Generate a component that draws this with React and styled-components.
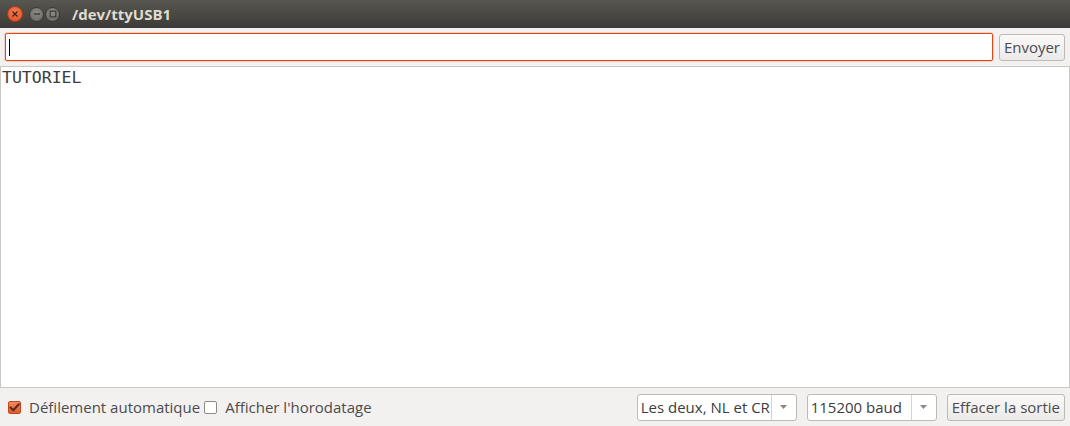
import React from 'react';
import styled, { createGlobalStyle } from 'styled-components';

const GlobalStyle = createGlobalStyle`
    html, body {
        margin: 0;
        padding: 0;
        background: #f2f1f0;
    }
    body {
        font-family: "Open Sans", "DejaVu Sans", sans-serif;
        font-size: 15px;
        color: #3c3c3c;
    }
`;

const Frame = styled.div`
    width: 1070px;
    height: 426px;
    display: flex;
    flex-direction: column;
    background: #f2f1f0;
    overflow: hidden;
`;

const TitleBar = styled.div`
    height: 28px;
    flex: none;
    display: flex;
    align-items: center;
    padding-left: 7px;
    background: linear-gradient(#57564f, #3c3b37);
    box-sizing: border-box;
`;

const WinBtn = styled.span`
    width: ${p => (p.close ? 16 : 15)}px;
    height: ${p => (p.close ? 16 : 15)}px;
    box-sizing: border-box;
    border-radius: 50%;
    margin-right: ${p => (p.close ? 6 : 1)}px;
    display: flex;
    align-items: center;
    justify-content: center;
    background: ${p => (p.close ? 'radial-gradient(circle at 50% 35%, #f47e58, #df4a1e)' : 'radial-gradient(circle at 50% 35%, #8b8a84, #66655f)')};
    border: 1px solid ${p => (p.close ? '#b63b17' : '#3a3935')};
`;

const Title = styled.span`
    margin-left: 11px;
    font-weight: bold;
    font-size: 15px;
    color: #dfdbd2;
`;

const SendRow = styled.div`
    display: flex;
    align-items: center;
    gap: 6px;
    padding: 5px;
    height: 38px;
    box-sizing: border-box;
    flex: none;
`;

const SendInput = styled.div`
    flex: 1;
    height: 28px;
    box-sizing: border-box;
    background: #fff;
    border: 1px solid #dd4814;
    border-radius: 2px;
    box-shadow: 0 0 0 1px rgba(240, 150, 120, 0.35);
    display: flex;
    align-items: center;
    padding-left: 3px;
`;

const Caret = styled.span`
    width: 1px;
    height: 17px;
    background: #000;
`;

const Button = styled.div`
    height: 27px;
    box-sizing: border-box;
    padding: 0 4px;
    display: flex;
    align-items: center;
    border: 1px solid #bdbbb6;
    border-radius: 3px;
    background: linear-gradient(#faf9f8, #ebeae8);
    font-size: 15px;
    color: #4c4c4c;
`;

const Output = styled.div`
    flex: 1;
    background: #fff;
    border: 1px solid #c9c7c3;
    font-family: "DejaVu Sans Mono", "Liberation Mono", monospace;
    font-size: 16.5px;
    color: #3c3c3c;
    padding: 1px 1px;
    line-height: 20px;
`;

const StatusBar = styled.div`
    height: 38px;
    flex: none;
    display: flex;
    align-items: center;
    padding: 0 5px 0 8px;
    box-sizing: border-box;
`;

const CheckLabel = styled.label`
    display: flex;
    align-items: center;
    gap: 8px;
    margin-right: 4px;
    color: #4c4c4c;
`;

const Box = styled.span`
    width: 13px;
    height: 13px;
    box-sizing: border-box;
    border-radius: 2px;
    display: flex;
    align-items: center;
    justify-content: center;
    background: ${p => (p.checked ? 'linear-gradient(#f08a62, #e0592b)' : '#fff')};
    border: 1px solid ${p => (p.checked ? '#c4461a' : '#8d8b86')};
`;

const Spacer = styled.div`
    flex: 1;
`;

const Select = styled.div`
    width: ${p => p.w}px;
    height: 27px;
    box-sizing: border-box;
    display: flex;
    margin-right: 10px;
    border: 1px solid #bdbbb6;
    border-radius: 3px;
    background: #fff;
    color: #3c3c3c;
`;

const SelectText = styled.div`
    flex: 1;
    display: flex;
    align-items: center;
    padding-left: 3px;
    white-space: nowrap;
    overflow: hidden;
`;

const SelectArrow = styled.div`
    width: 24px;
    border-left: 1px solid #d6d4d0;
    display: flex;
    align-items: center;
    justify-content: center;
`;

const Check = () => (
    <svg width="11" height="9" viewBox="0 0 11 9">
        <path d="M1.5 4.5 L4.3 7.2 L9.8 1.3" fill="none" stroke="#5a2a18" strokeWidth="2" strokeLinecap="round" strokeLinejoin="round" />
    </svg>
);

const Arrow = () => (
    <svg width="7" height="4" viewBox="0 0 7 4">
        <path d="M0 0 L7 0 L3.5 4 Z" fill="#8a8884" />
    </svg>
);

const Glyph = ({ kind }) => (
    <svg width="8" height="8" viewBox="0 0 8 8">
        {kind === 'close' && <path d="M1.5 1.5 L6.5 6.5 M6.5 1.5 L1.5 6.5" stroke="#3c2418" strokeWidth="1.4" />}
        {kind === 'min' && <path d="M1 4 L7 4" stroke="#3c3b37" strokeWidth="1.4" />}
        {kind === 'max' && <rect x="1.2" y="1.2" width="5.6" height="5.6" fill="none" stroke="#3c3b37" strokeWidth="1.2" />}
    </svg>
);

export default function App() {
    return (
        <Frame>
            <GlobalStyle />
            <TitleBar>
                <WinBtn close><Glyph kind="close" /></WinBtn>
                <WinBtn><Glyph kind="min" /></WinBtn>
                <WinBtn><Glyph kind="max" /></WinBtn>
                <Title>/dev/ttyUSB1</Title>
            </TitleBar>
            <SendRow>
                <SendInput><Caret /></SendInput>
                <Button>Envoyer</Button>
            </SendRow>
            <Output>TUTORIEL</Output>
            <StatusBar>
                <CheckLabel><Box checked><Check /></Box>Défilement automatique</CheckLabel>
                <CheckLabel><Box />Afficher l'horodatage</CheckLabel>
                <Spacer />
                <Select w={160}>
                    <SelectText>Les deux, NL et CR</SelectText>
                    <SelectArrow><Arrow /></SelectArrow>
                </Select>
                <Select w={130}>
                    <SelectText>115200 baud</SelectText>
                    <SelectArrow><Arrow /></SelectArrow>
                </Select>
                <Button>Effacer la sortie</Button>
            </StatusBar>
        </Frame>
    );
}
